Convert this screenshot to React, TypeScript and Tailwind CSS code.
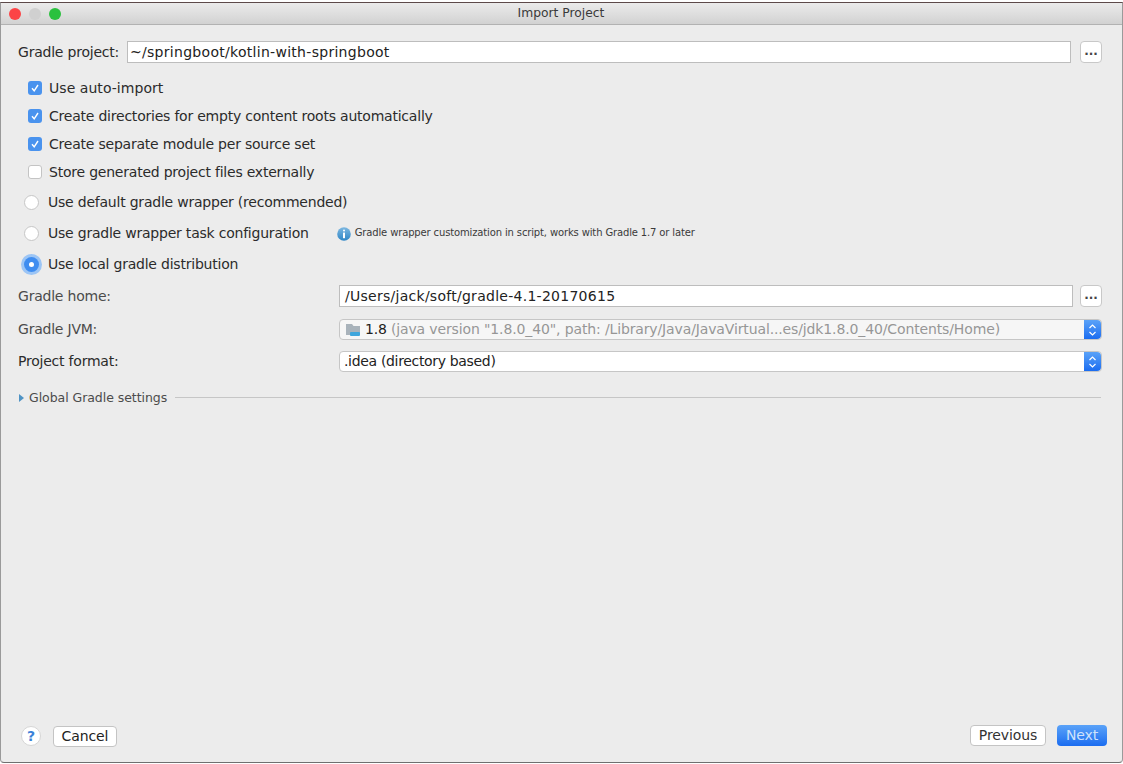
const fontStack = { fontFamily: '"DejaVu Sans", sans-serif' }

function Check({ checked, label, wide }: { checked: boolean; label: string; wide?: boolean }) {
  return (
    <div className="flex h-[28px] items-center pl-[27px]">
      {checked ? (
        <span className="flex h-[14px] w-[14px] items-center justify-center rounded-[3px] bg-[#4a93ee]">
          <svg width="10" height="10" viewBox="0 0 10 10" fill="none">
            <path d="M2 5.2 L4.2 7.8 L8 2" stroke="#fff" strokeWidth="1.4" />
          </svg>
        </span>
      ) : (
        <span className="h-[14px] w-[14px] rounded-[3px] border border-[#c4c4c4] bg-white" />
      )}
      <span className={`ml-[7px] text-[14px] text-[#2b2b2b] ${wide ? 'tracking-[0.05px]' : 'tracking-[-0.22px]'}`}>
        {label}
      </span>
    </div>
  )
}

function Radio({ selected, label }: { selected?: boolean; label: string }) {
  return (
    <div className="flex h-[31px] items-center pl-[19px]">
      <span className="flex h-[22px] w-[22px] items-center justify-center">
        {selected ? (
          <span className="flex h-[21px] w-[21px] items-center justify-center rounded-full bg-[#9cc5f5]">
            <span className="flex h-[15px] w-[15px] items-center justify-center rounded-full bg-[#3f8df0]">
              <span className="h-[5px] w-[5px] rounded-full bg-white" />
            </span>
          </span>
        ) : (
          <span className="h-[15px] w-[15px] rounded-full border border-[#c6c6c6] bg-white" />
        )}
      </span>
      <span className="ml-[6px] text-[14px] tracking-[-0.22px] text-[#2b2b2b]">{label}</span>
    </div>
  )
}

function Browse() {
  return (
    <div className="flex h-[22px] w-[22px] shrink-0 items-center justify-center rounded-[4px] border border-[#c8c8c8] bg-white pb-[3px] text-[12px] font-bold text-[#444]">
      ...
    </div>
  )
}

function Stepper() {
  return (
    <span className="flex h-full w-[17px] shrink-0 items-center justify-center rounded-r-[4px] bg-gradient-to-b from-[#5aa2f8] to-[#1a6cf0]">
      <svg width="9" height="14" viewBox="0 0 9 14" fill="none">
        <path d="M1.5 5 L4.5 2 L7.5 5 M1.5 9 L4.5 12 L7.5 9" stroke="#fff" strokeWidth="1.2" />
      </svg>
    </span>
  )
}

export default function App() {
  return (
    <div
      style={fontStack}
      className="flex h-[764px] w-[1123px] flex-col overflow-hidden bg-white pt-[2px] pb-[1px]"
    >
      <div className="flex flex-1 flex-col overflow-hidden rounded-b-[4px] border-x border-b border-t border-x-[#9a9a9a] border-b-[#6f6f6f] border-t-[#5d4a4a] bg-[#ececec]">
        {/* title bar */}
        <div className="flex h-[22px] shrink-0 items-center border-b border-[#b2b2b2] bg-gradient-to-b from-[#ebebeb] to-[#d2d2d2] pl-[8px]">
          <span className="h-[12px] w-[12px] rounded-full bg-[#fc4446]" />
          <span className="ml-[8px] h-[12px] w-[12px] rounded-full bg-[#d0d0d0]" />
          <span className="ml-[8px] h-[12px] w-[12px] rounded-full bg-[#2ac13e]" />
          <span className="flex-1 pr-[61px] text-center text-[12.3px] text-[#3a3a3a]">Import Project</span>
        </div>

        <div className="flex flex-1 flex-col">
          {/* project path */}
          <div className="mt-[16px] flex h-[22px] items-center pl-[17px] pr-[20px]">
            <span className="w-[109px] text-[14px] tracking-[-0.22px] text-[#2b2b2b]">Gradle project:</span>
            <div className="flex h-full flex-1 items-center border border-[#bdbdbd] bg-white pl-[2px] text-[14px] tracking-[0.29px] text-[#222]">
              ~/springboot/kotlin-with-springboot
            </div>
            <div className="ml-[9px]">
              <Browse />
            </div>
          </div>

          <div className="mt-[11px]">
            <Check checked wide label="Use auto-import" />
            <Check checked label="Create directories for empty content roots automatically" />
            <Check checked label="Create separate module per source set" />
            <Check checked={false} label="Store generated project files externally" />
          </div>

          <div className="mt-[1px]">
            <Radio label="Use default gradle wrapper (recommended)" />
            <div className="flex items-center">
              <Radio label="Use gradle wrapper task configuration" />
              <svg className="ml-[28px] shrink-0" width="14" height="14" viewBox="0 0 14 14">
                <defs>
                  <linearGradient id="infoFill" x1="0" y1="0" x2="0" y2="1">
                    <stop offset="0" stopColor="#7db7e0" />
                    <stop offset="1" stopColor="#2f86c6" />
                  </linearGradient>
                </defs>
                <circle cx="7" cy="7" r="6.8" fill="url(#infoFill)" />
                <rect x="6" y="2.6" width="2" height="2" rx="1" fill="#fff" />
                <rect x="6" y="5.6" width="2" height="5.6" fill="#fff" />
              </svg>
              <span className="mb-[2px] ml-[4px] text-[10px] tracking-[-0.14px] text-[#3a3a3a]">
                Gradle wrapper customization in script, works with Gradle 1.7 or later
              </span>
            </div>
            <Radio selected label="Use local gradle distribution" />
          </div>

          {/* gradle home / jvm / format */}
          <div className="mt-[5px] flex h-[22px] items-center pl-[17px] pr-[20px]">
            <span className="w-[321px] text-[14px] tracking-[-0.22px] text-[#4b4b4b]">Gradle home:</span>
            <div className="flex h-full flex-1 items-center border border-[#bdbdbd] bg-white pl-[5px] text-[14px] tracking-[0.27px] text-[#222]">
              /Users/jack/soft/gradle-4.1-20170615
            </div>
            <div className="ml-[7px]">
              <Browse />
            </div>
          </div>

          <div className="mt-[12px] flex h-[21px] items-center pl-[17px] pr-[20px]">
            <span className="w-[321px] text-[14px] tracking-[-0.22px] text-[#4b4b4b]">Gradle JVM:</span>
            <div className="flex h-full flex-1 items-center rounded-[4px] border border-[#c6c6c6] bg-[#f6f6f6] pl-[6px] text-[14px] tracking-[-0.13px]">
              <svg className="shrink-0" width="15" height="14" viewBox="0 0 15 14">
                <path d="M0 1 H6 L7.5 3 H14 V12 H0 Z" fill="#a9b3bb" />
                <rect x="4" y="9" width="10" height="4" rx="1" fill="#3fa6dc" />
              </svg>
              <span className="ml-[4px] text-[#222]">1.8</span>
              <span className="ml-[4px] flex-1 truncate text-[#969696]">
                (java version "1.8.0_40", path: /Library/Java/JavaVirtual...es/jdk1.8.0_40/Contents/Home)
              </span>
              <Stepper />
            </div>
          </div>

          <div className="mt-[11px] flex h-[21px] items-center pl-[17px] pr-[20px]">
            <span className="w-[321px] text-[14px] tracking-[-0.22px] text-[#2b2b2b]">Project format:</span>
            <div className="flex h-full flex-1 items-center rounded-[4px] border border-[#c6c6c6] bg-white pl-[4px] text-[14px] tracking-[-0.33px] text-[#222]">
              <span className="flex-1">.idea (directory based)</span>
              <Stepper />
            </div>
          </div>

          <div className="mt-[16px] flex h-[20px] items-center pl-[18px] pr-[21px]">
            <svg width="5" height="8" viewBox="0 0 5 8">
              <path d="M0 0 L5 4 L0 8 Z" fill="#4f93c4" />
            </svg>
            <span className="ml-[5px] text-[12.5px] tracking-[-0.05px] text-[#4b4b4b]">Global Gradle settings</span>
            <div className="mb-[2px] ml-[8px] h-px flex-1 bg-[#c6c6c6]" />
          </div>

          {/* footer */}
          <div className="mt-auto mb-[15px] flex h-[22px] items-center pl-[20px] pr-[15px]">
            <span className="flex h-[20px] w-[20px] items-center justify-center rounded-full border border-[#d6d6d6] bg-white text-[14px] font-semibold text-[#3b82d8]">
              ?
            </span>
            <span className="ml-[12px] flex h-[21px] w-[64px] items-center justify-center rounded-[4px] border border-[#c4c4c4] bg-white text-[14px] tracking-[-0.1px] text-[#222]">
              Cancel
            </span>
            <span className="ml-auto flex h-[21px] w-[76px] -translate-y-px items-center justify-center rounded-[4px] border border-[#c4c4c4] bg-white text-[14px] tracking-[-0.1px] text-[#333]">
              Previous
            </span>
            <span className="ml-[11px] flex h-[21px] w-[50px] -translate-y-px items-center justify-center rounded-[4px] bg-gradient-to-b from-[#5aa2f8] to-[#1a6cf0] text-[14px] tracking-[-0.1px] text-[#cfe3fb]">
              Next
            </span>
          </div>
        </div>
      </div>
    </div>
  )
}
